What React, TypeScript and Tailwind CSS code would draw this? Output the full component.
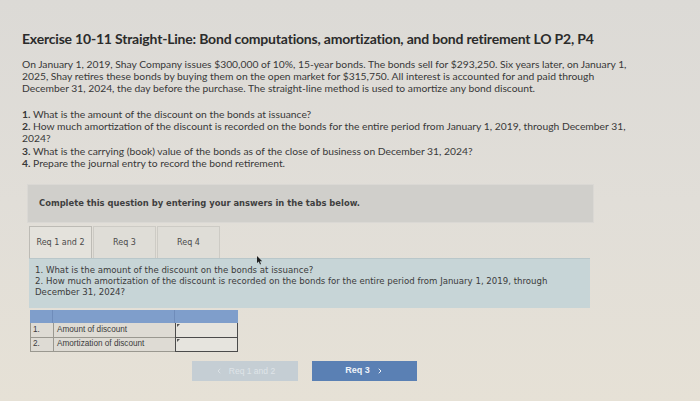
import { ChevronLeft, ChevronRight } from 'lucide-react';

const lato = { fontFamily: 'Lato, "Open Sans", sans-serif' };
const verdana = { fontFamily: '"DejaVu Sans", Verdana, sans-serif' };
const arial = { fontFamily: '"Liberation Sans", Arial, sans-serif' };

function Tab({ label, active }: { label: string; active?: boolean }) {
  return (
    <div
      className={
        'w-[63px] h-[32px] flex items-center justify-center text-[8px] text-[#4a4a4a] border border-b-0 ' +
        (active ? 'bg-[#e4e2dc] border-[#bdbbb5]' : 'bg-[#dfddd7] border-[#cdcbc5]')
      }
      style={verdana}
    >
      {label}
    </div>
  );
}

function Row({ n, label }: { n: string; label: string }) {
  return (
    <div className="flex h-[14.5px] text-[8.2px] text-[#3c3c3c]" style={arial}>
      <div className="w-[23px] border-l border-b border-[#9a9890] flex items-center pl-[2px] bg-[#dedbd4]">{n}</div>
      <div className="w-[122px] border-l border-b border-[#9a9890] flex items-center pl-[3px] bg-[#dedbd4]">{label}</div>
      <div className="relative w-[63px] border border-t-0 border-[#4b4b4b] bg-[#e6e4de]">
        <div className="absolute left-[1px] top-[1px] w-0 h-0 border-t-[3px] border-r-[3px] border-t-[#555] border-r-transparent" />
      </div>
    </div>
  );
}

export default function App() {
  return (
    <div className="relative w-[700px] h-[401px] overflow-hidden bg-gradient-to-b from-[#dcdad6] via-[#e1ded8] to-[#e6e1d6] pl-[22px] pt-[30px] text-[#383838]">
      <h1 className="text-[14px] font-bold leading-[17px] text-[#2b2b2b] tracking-[-0.2px] whitespace-nowrap" style={lato}>
        Exercise 10-11 Straight-Line: Bond computations, amortization, and bond retirement LO P2, P4
      </h1>

      <p className="mt-[11px] text-[10.3px] leading-[12px] whitespace-nowrap" style={lato}>
        On January 1, 2019, Shay Company issues $300,000 of 10%, 15-year bonds. The bonds sell for $293,250. Six years later, on January 1,
        <br />
        2025, Shay retires these bonds by buying them on the open market for $315,750. All interest is accounted for and paid through
        <br />
        December 31, 2024, the day before the purchase. The straight-line method is used to amortize any bond discount.
      </p>

      <div className="mt-[14px] text-[10.3px] leading-[12.2px] whitespace-nowrap" style={lato}>
        <p><span className="font-bold">1.</span> What is the amount of the discount on the bonds at issuance?</p>
        <p><span className="font-bold">2.</span> How much amortization of the discount is recorded on the bonds for the entire period from January 1, 2019, through December 31,</p>
        <p>2024?</p>
        <p><span className="font-bold">3.</span> What is the carrying (book) value of the bonds as of the close of business on December 31, 2024?</p>
        <p><span className="font-bold">4.</span> Prepare the journal entry to record the bond retirement.</p>
      </div>

      <div className="mt-[15px] ml-[5px] w-[567px] h-[39px] bg-[#d0cfcb] border border-[#dad8d4] flex items-center pl-[11px]">
        <span className="text-[8.4px] font-bold text-[#3f3f3f]" style={verdana}>
          Complete this question by entering your answers in the tabs below.
        </span>
      </div>

      <div className="ml-[7px] mt-[3px] flex gap-[1px]">
        <Tab label="Req 1 and 2" active />
        <Tab label="Req 3" />
        <Tab label="Req 4" />
      </div>

      <div className="ml-[7px] w-[561px] h-[50px] bg-[#c7d5d7] border-t border-[#b9c7ca] pl-[6px] pt-[6px] text-[8.6px] leading-[11px] text-[#3b3b3b] whitespace-nowrap" style={verdana}>
        <p>1. What is the amount of the discount on the bonds at issuance?</p>
        <p>2. How much amortization of the discount is recorded on the bonds for the entire period from January 1, 2019, through</p>
        <p>December 31, 2024?</p>
      </div>

      <div className="ml-[8px] mt-[2px] w-[208px]">
        <div className="flex h-[13px] bg-[#7f9ecb]">
          <div className="w-[23px] border-r border-[#6f8cba]" />
          <div className="w-[122px] border-r border-[#6f8cba]" />
          <div className="w-[63px]" />
        </div>
        <Row n="1." label="Amount of discount" />
        <Row n="2." label="Amortization of discount" />
      </div>

      <div className="ml-[170px] mt-[9px] flex gap-[14px]">
        <div className="w-[106px] h-[20px] bg-[#c5ced4] flex items-center justify-center gap-[6px] text-[8.5px] text-[#dfe4e8]" style={arial}>
          <ChevronLeft className="w-[8px] h-[8px]" strokeWidth={2.5} />
          <span>Req 1 and 2</span>
        </div>
        <div className="w-[105px] h-[20px] bg-[#5a80b4] flex items-center justify-center gap-[6px] text-[9px] font-bold text-[#eef3f9]" style={arial}>
          <span>Req 3</span>
          <ChevronRight className="w-[8px] h-[8px]" strokeWidth={3} />
        </div>
      </div>

      <svg className="absolute left-[257px] top-[256px]" width="6" height="9" viewBox="0 0 6 9">
        <path d="M0 0 L0 7 L1.8 5.5 L3 8.5 L4 8 L2.8 5.2 L5.2 5.2 Z" fill="#1f1f1f" />
      </svg>
    </div>
  );
}
